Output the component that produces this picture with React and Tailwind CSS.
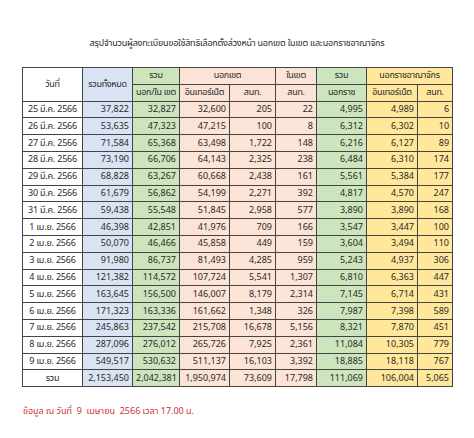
const rows = [
  ["25 มี.ค. 2566", "37,822", "32,827", "32,600", "205", "22", "4,995", "4,989", "6"],
  ["26 มี.ค. 2566", "53,635", "47,323", "47,215", "100", "8", "6,312", "6,302", "10"],
  ["27 มี.ค. 2566", "71,584", "65,368", "63,498", "1,722", "148", "6,216", "6,127", "89"],
  ["28 มี.ค. 2566", "73,190", "66,706", "64,143", "2,325", "238", "6,484", "6,310", "174"],
  ["29 มี.ค. 2566", "68,828", "63,267", "60,668", "2,438", "161", "5,561", "5,384", "177"],
  ["30 มี.ค. 2566", "61,679", "56,862", "54,199", "2,271", "392", "4,817", "4,570", "247"],
  ["31 มี.ค. 2566", "59,438", "55,548", "51,845", "2,958", "577", "3,890", "3,890", "168"],
  ["1 เม.ย. 2566", "46,398", "42,851", "41,976", "709", "166", "3,547", "3,447", "100"],
  ["2 เม.ย. 2566", "50,070", "46,466", "45,858", "449", "159", "3,604", "3,494", "110"],
  ["3 เม.ย. 2566", "91,980", "86,737", "81,493", "4,285", "959", "5,243", "4,937", "306"],
  ["4 เม.ย. 2566", "121,382", "114,572", "107,724", "5,541", "1,307", "6,810", "6,363", "447"],
  ["5 เม.ย. 2566", "163,645", "156,500", "146,007", "8,179", "2,314", "7,145", "6,714", "431"],
  ["6 เม.ย. 2566", "171,323", "163,336", "161,662", "1,348", "326", "7,987", "7,398", "589"],
  ["7 เม.ย. 2566", "245,863", "237,542", "215,708", "16,678", "5,156", "8,321", "7,870", "451"],
  ["8 เม.ย. 2566", "287,096", "276,012", "265,726", "7,925", "2,361", "11,084", "10,305", "779"],
  ["9 เม.ย. 2566", "549,517", "530,632", "511,137", "16,103", "3,392", "18,885", "18,118", "767"],
];

const total = ["รวม", "2,153,450", "2,042,381", "1,950,974", "73,609", "17,798", "111,069", "106,004", "5,065"];

// fill per column
const colBg = [
  "bg-white",
  "bg-[#dae3f3]",
  "bg-[#cce5bd]",
  "bg-[#fbe3d6]",
  "bg-[#fbe3d6]",
  "bg-[#fbe3d6]",
  "bg-[#cce5bd]",
  "bg-[#ffe79c]",
  "bg-[#ffe79c]",
];

const cell = "border border-[#444] px-[3px] py-0 h-[16.8px] leading-none whitespace-nowrap overflow-hidden";
const head = `${cell} font-normal text-center tracking-[-0.3px]`;

export default function App() {
  return (
    <div
      className="w-[474px] h-[438px] bg-white text-[#2a2a2a] overflow-hidden"
      style={{ fontFamily: 'Tahoma, "Noto Sans Thai", "Leelawadee UI", "Noto Sans", sans-serif' }}
    >
      <div className="pt-[36px] h-[67px] text-center text-[9px] leading-[14px] tracking-[-0.2px] whitespace-nowrap">
        สรุปจำนวนผู้ลงทะเบียนขอใช้สิทธิเลือกตั้งล่วงหน้า นอกเขต ในเขต และนอกราชอาณาจักร
      </div>

      <table className="ml-[22px] w-[430px] table-fixed border-collapse text-[9px]">
        <colgroup>
          <col className="w-[60px]" />
          <col className="w-[50px]" />
          <col className="w-[47px]" />
          <col className="w-[50px]" />
          <col className="w-[46px]" />
          <col className="w-[41px]" />
          <col className="w-[50px]" />
          <col className="w-[51px]" />
          <col className="w-[35px]" />
        </colgroup>
        <thead>
          <tr>
            <th rowSpan={2} className={`${head} bg-white`}>วันที่</th>
            <th rowSpan={2} className={`${head} bg-[#dae3f3]`}>รวมทั้งหมด</th>
            <th className={`${head} bg-[#cce5bd]`}>รวม</th>
            <th colSpan={2} className={`${head} bg-[#fbe3d6]`}>นอกเขต</th>
            <th className={`${head} bg-[#fbe3d6]`}>ในเขต</th>
            <th className={`${head} bg-[#cce5bd]`}>รวม</th>
            <th colSpan={2} className={`${head} bg-[#ffe79c]`}>นอกราชอาณาจักร</th>
          </tr>
          <tr>
            <th className={`${head} bg-[#cce5bd]`}>นอก/ใน เขต</th>
            <th className={`${head} bg-[#fbe3d6]`}>อินเทอร์เน็ต</th>
            <th className={`${head} bg-[#fbe3d6]`}>สนท.</th>
            <th className={`${head} bg-[#fbe3d6]`}>สนท.</th>
            <th className={`${head} bg-[#cce5bd]`}>นอกราช</th>
            <th className={`${head} bg-[#ffe79c]`}>อินเทอร์เน็ต</th>
            <th className={`${head} bg-[#ffe79c]`}>สนท.</th>
          </tr>
        </thead>
        <tbody>
          {[...rows, total].map((r) => (
            <tr key={r[0]}>
              {r.map((v, i) => (
                <td
                  key={i}
                  className={`${cell} ${colBg[i]} ${i === 0 ? "text-center tracking-[-0.2px]" : "text-right"}`}
                >
                  {v}
                </td>
              ))}
            </tr>
          ))}
        </tbody>
      </table>

      <div className="mt-[17px] pl-[23px] text-[9px] leading-[14px] text-[#cc3333] whitespace-pre">
        ข้อมูล ณ วันที่  9  เมษายน  2566 เวลา 17.00 น.
      </div>
    </div>
  );
}
